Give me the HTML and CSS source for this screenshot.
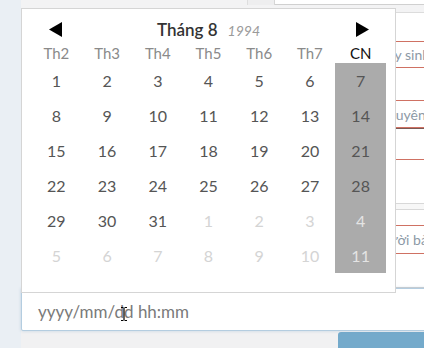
FILE: index.html
```html
<!DOCTYPE html>
<html lang="vi">
<head>
<meta charset="utf-8">
<title>Chọn ngày</title>
<link rel="stylesheet" href="styles.css">
</head>
<body>
<div class="page">
  <aside class="sidebar"></aside>
  <main class="main">
    <div class="topbar">
      <div class="topbar-gap"></div>
      <div class="topbar-tab"></div>
      <div class="topbar-box"></div>
    </div>
    <div class="form-area">
      <div class="form-left"></div>
      <div class="form-panel">
        <div class="field field-first"><span class="ph">Ngày sinh</span></div>
        <div class="field field-second"><span class="ph">Nguyên quán</span></div>
        <div class="field field-third"></div>
        <div class="divider"></div>
        <div class="field field-fourth"><span class="ph">Người bảo lãnh</span></div>
      </div>
    </div>
    <div class="date-input">
      <span class="date-ph">yyyy/mm/dd hh:mm</span>
    </div>
    <div class="bottombar">
      <div class="bottom-gap"></div>
      <div class="bottom-btn"></div>
    </div>
  </main>

  <div class="picker">
    <div class="picker-title">
      <span class="nav nav-prev"><svg width="13" height="15" viewBox="0 0 13 15"><polygon points="13,0 13,15 0,7.5" fill="#000"/></svg></span>
      <span class="month"><span class="month-name">Tháng 8</span><span class="year">1994</span></span>
      <span class="nav nav-next"><svg width="13" height="15" viewBox="0 0 13 15"><polygon points="0,0 0,15 13,7.5" fill="#000"/></svg></span>
    </div>
    <div class="picker-grid">
      <span class="dow">Th2</span><span class="dow">Th3</span><span class="dow">Th4</span><span class="dow">Th5</span><span class="dow">Th6</span><span class="dow">Th7</span><span class="dow dow-sun">CN</span>
      <span class="day">1</span><span class="day">2</span><span class="day">3</span><span class="day">4</span><span class="day">5</span><span class="day">6</span><span class="day sun">7</span>
      <span class="day">8</span><span class="day">9</span><span class="day">10</span><span class="day">11</span><span class="day">12</span><span class="day">13</span><span class="day sun">14</span>
      <span class="day">15</span><span class="day">16</span><span class="day">17</span><span class="day">18</span><span class="day">19</span><span class="day">20</span><span class="day sun">21</span>
      <span class="day">22</span><span class="day">23</span><span class="day">24</span><span class="day">25</span><span class="day">26</span><span class="day">27</span><span class="day sun">28</span>
      <span class="day">29</span><span class="day">30</span><span class="day">31</span><span class="day other">1</span><span class="day other">2</span><span class="day other">3</span><span class="day sun other">4</span>
      <span class="day other">5</span><span class="day other">6</span><span class="day other">7</span><span class="day other">8</span><span class="day other">9</span><span class="day other">10</span><span class="day sun other">11</span>
    </div>
  </div>

  <svg class="cursor" width="8" height="16" viewBox="0 0 8 16"><path d="M1 1.5h2.5M4.5 1.5H7M4 2v12M1 14.5h2.5M4.5 14.5H7" stroke="#000" stroke-width="1.2" fill="none"/></svg>
</div>
</body>
</html>
```

FILE: styles.css
```css
* { box-sizing: border-box; }
html, body { margin: 0; padding: 0; }
body {
  font-family: Lato, "Open Sans", "Liberation Sans", sans-serif;
  background: #f3f3f4;
  width: 424px;
  height: 348px;
  overflow: hidden;
}
.page {
  position: relative;
  display: flex;
  width: 424px;
  height: 348px;
  overflow: hidden;
}
.sidebar {
  width: 21px;
  flex: none;
  background: #eaeff4;
}
.main {
  flex: 1;
  display: flex;
  flex-direction: column;
  min-width: 0;
}
.topbar {
  display: flex;
  height: 5px;
}
.topbar-gap { width: 226px; background: #f3f3f4; }
.topbar-tab { width: 28px; background: #eeeeef; border-left: 1px solid #dedede; border-right: 1px solid #d6d6d6; }
.topbar-box { flex: 1; background: #fff; border-bottom: 1px solid #d0d0d0; }

.form-area {
  display: flex;
  margin-top: 7px;
  height: 276px;
}
.form-left { width: 341px; flex: none; }
.form-panel {
  flex: 1;
  min-width: 0;
  background: #fff;
  border-top: 1px solid #dcdcdc;
  border-bottom: 1px solid #d3d3d3;
  display: flex;
  flex-direction: column;
  overflow: hidden;
}
.field {
  background: #fff;
  border-top: 1px solid #cf7163;
  border-bottom: 1px solid #cf7163;
  display: flex;
  align-items: center;
  padding-left: 16px;
  font-size: 14px;
  color: #8c99a6;
  white-space: nowrap;
  overflow: hidden;
}
.field-first { margin-top: 28px; height: 27px; padding-left: 8px; }
.field-second { margin-top: 32px; height: 28px; }
.field-third { height: 32px; border-top-color: #7a5a55; }
.divider {
  margin-top: 43px;
  height: 7px;
  border-top: 1px solid #d8d8d8;
  border-bottom: 1px solid #d8d8d8;
  background: #f7f7f7;
}
.field-fourth { margin-top: 15px; height: 29px; padding-left: 9px; }

.date-input {
  height: 43px;
  margin-right: -10px;
  background: #fff;
  border: 1px solid #b4cde0;
  border-radius: 2px;
  box-shadow: 0 0 3px rgba(120, 160, 195, 0.45);
  display: flex;
  align-items: center;
  padding-left: 16px;
  position: relative;
  z-index: 1;
}
.date-ph {
  font-size: 17px;
  color: #7a7a7a;
  margin-top: 3px;
}
.bottombar {
  flex: 1;
  display: flex;
  padding-top: 1px;
}
.bottom-gap { width: 317px; background: #f1f1f2; }
.bottom-btn { flex: 1; background: #74aacb; border-radius: 3px 0 0 0; }

.picker {
  position: absolute;
  left: 21px;
  top: 8px;
  width: 375px;
  height: 285px;
  background: #fff;
  border: 1px solid #d5d5d5;
  padding: 4px 8px 0 9px;
  z-index: 2;
}
.picker-title {
  display: grid;
  grid-template-columns: repeat(7, 1fr);
  width: 355px;
  height: 32px;
  align-items: center;
}
.nav {
  display: flex;
  justify-content: center;
  padding-top: 1px;
}
.nav-prev { padding-right: 2px; }
.nav-next { padding-left: 3px; }
.month {
  grid-column: 2 / 7;
  text-align: center;
  white-space: nowrap;
}
.month-name {
  font-size: 17px;
  font-weight: 600;
  color: #333;
}
.year {
  font-size: 14px;
  font-style: italic;
  color: #9a9a9a;
  margin-left: 10px;
}
.picker-grid {
  display: grid;
  grid-template-columns: repeat(7, 1fr);
  grid-template-rows: 18px repeat(6, 35px);
  width: 355px;
}
.dow {
  display: flex;
  align-items: center;
  justify-content: center;
  font-size: 15px;
  color: #8a8a8a;
  padding-bottom: 2px;
}
.dow-sun { color: #111; }
.day {
  display: flex;
  align-items: center;
  justify-content: center;
  font-size: 16px;
  color: #555;
}
.day.other { color: #d4d4d4; }
.day.sun { background: #ababab; color: #555; }
.day.sun.other { color: #e4e4e4; }

.cursor {
  position: absolute;
  left: 120px;
  top: 306px;
  z-index: 3;
}
```
